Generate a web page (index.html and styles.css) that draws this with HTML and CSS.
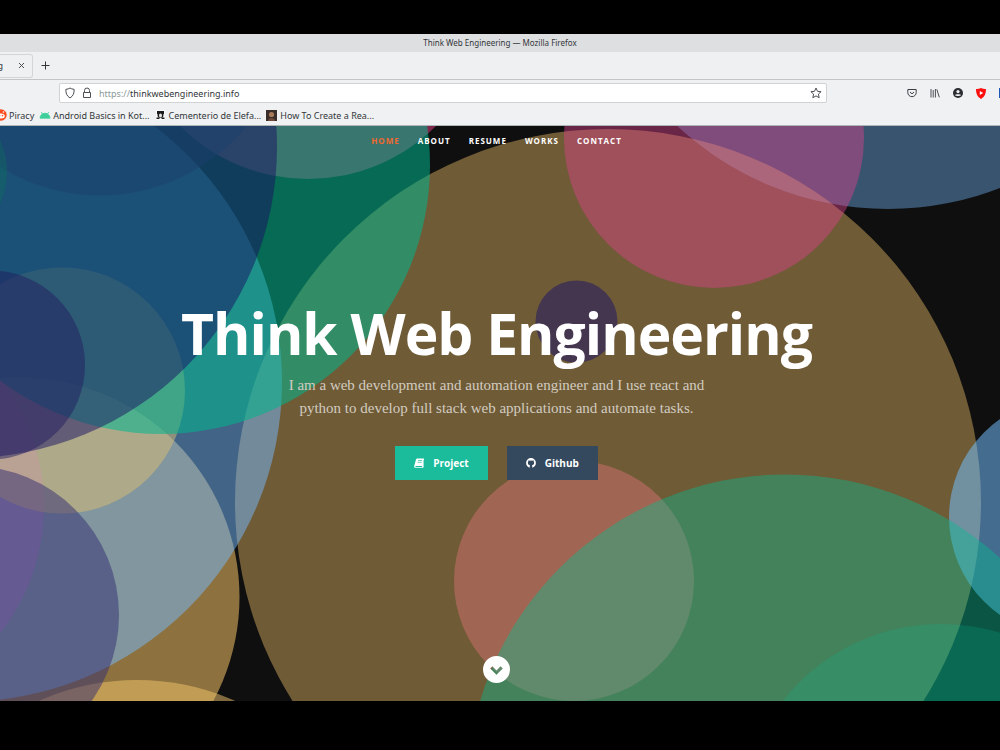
FILE: index.html
```html
<!DOCTYPE html>
<html lang="en">
<head>
    <meta charset="UTF-8">
    <meta name="viewport" content="width=device-width, initial-scale=1.0">
    <title>Think Web Engineering</title>
    <link rel="stylesheet" href="styles.css">
</head>
<body>
<div class="titlebar">Think Web Engineering — Mozilla Firefox</div>

<div class="tabs">
    <div class="tab">
        <span class="tab-title">Think Web Engineering</span>
        <button class="icon-btn" aria-label="Close tab">
            <svg width="7" height="7" viewBox="0 0 7 7"><path d="M1 1l5 5M6 1l-5 5" stroke="#4d5154" fill="none"/></svg>
        </button>
    </div>
    <button class="icon-btn new-tab" aria-label="New tab">
        <svg width="9" height="9" viewBox="0 0 9 9"><path d="M4.500 .5v8M.5 4.500h8" stroke="#33373a" fill="none"/></svg>
    </button>
</div>

<div class="toolbar">
    <div class="url-bar">
        <svg width="10" height="12" viewBox="0 0 10 12"><path d="M5 1C4 1.800 2.500 2.200.9 2.300.6 6 1.800 9 5 11c3.200-2 4.400-5 4.100-8.700C7.500 2.200 6 1.800 5 1z" fill="none" stroke="#4d5154"/></svg>
        <svg width="10" height="12" viewBox="0 0 10 12"><path d="M2.500 5.500V3.500a2.500 2.500 0 0 1 5 0v2M1.500 5.500h7v5h-7z" fill="none" stroke="#4d5154" stroke-linejoin="round"/></svg>
        <label class="url"><span class="scheme">https://</span><input type="text" value="thinkwebengineering.info" aria-label="Address"></label>
        <svg width="12" height="12" viewBox="0 0 12 12"><path d="M6 1l1.500 3.300 3.600.4-2.700 2.400.8 3.600L6 8.900l-3.200 1.800.8-3.600L.9 4.700l3.600-.4z" fill="none" stroke="#4d5154" stroke-linejoin="round"/></svg>
    </div>
    <div class="tools">
        <svg width="10" height="10" viewBox="0 0 10 10"><path d="M.8 1.500h8.400v3a4.200 4.200 0 0 1-8.400 0zM3 4l2 1.900L7 4" fill="none" stroke="#3c4043" stroke-linejoin="round"/></svg>
        <svg width="10" height="10" viewBox="0 0 10 10"><path d="M1 1v8.500M3.200 2v7.500M5.400 1v8.500M6.800 1.300l2.500 8" fill="none" stroke="#4d5154"/></svg>
        <svg width="10" height="10" viewBox="0 0 10 10"><circle cx="5" cy="5" r="5" fill="#2a2e31"/><circle cx="5" cy="3.600" r="1.600" fill="#eff0f1"/><path d="M2 7.200c0-1.300 6-1.300 6 0C7.200 8.300 2.800 8.300 2 7.200z" fill="#eff0f1"/></svg>
        <svg width="10" height="11" viewBox="0 0 10 11"><path d="M5 0c1.500.8 3.200 1.100 5 1.100C10 6 8.500 9 5 11 1.500 9 0 6 0 1.100 1.800 1.100 3.500.8 5 0z" fill="#fb0f0f"/><path d="M3.800 3l3.400 2-3.400 2z" fill="#fff"/></svg>
        <svg width="10" height="10" viewBox="0 0 10 10"><path d="M0 0h10v10H0z" fill="#1c57b5"/></svg>
    </div>
</div>

<div class="bookmarks">
    <a href="#">
        <svg width="12" height="12" viewBox="0 0 12 12"><circle cx="6" cy="6" r="5.700" fill="#fb4c1b"/><ellipse cx="6" cy="7" rx="3.800" ry="2.500" fill="#fff"/><circle cx="4.500" cy="6.600" r=".8" fill="#fb4c1b"/><circle cx="7.500" cy="6.600" r=".8" fill="#fb4c1b"/><circle cx="8.500" cy="3" r=".8" fill="#fff"/></svg>
        Piracy
    </a>
    <a href="#">
        <svg width="12" height="8" viewBox="0 0 12 8"><path d="M1 7.200a5 5 0 0 1 10 0zM2.200 1l1.600 2.500M9.800 1L8.200 3.500" fill="#3ecf9b" stroke="#3ecf9b" stroke-width=".8"/></svg>
        Android Basics in Kot...
    </a>
    <a href="#">
        <svg width="12" height="12" viewBox="0 0 12 12"><path d="M1 1h9v10H1z" fill="#fafafa"/><path d="M2 2h7v3H2z" fill="#1c1c1c"/><circle cx="5.500" cy="6" r="3" fill="#1c1c1c"/><ellipse cx="5.500" cy="6.500" rx="1.500" ry="2" fill="#e4e4e4"/><path d="M1.500 8.500h3v1.500h-3zM6.500 8.500h3v1.500h-3z" fill="#1c1c1c"/></svg>
        Cementerio de Elefa...
    </a>
    <a href="#">
        <svg width="12" height="12" viewBox="0 0 12 12"><path d="M0 1h11v11H0z" fill="#3a2e2a"/><circle cx="5.500" cy="5.500" r="2.600" fill="#a87a5c"/><path d="M2 12c0-4 7-4 7 0z" fill="#6b4a3a"/></svg>
        How To Create a Rea...
    </a>
</div>

<main class="hero">
    <svg class="circles" viewBox="0 126 1000 575" preserveAspectRatio="xMidYMid slice">
        <circle cx="888" cy="-100" r="309" fill="rgb(97,153,207)" fill-opacity=".5"/>
        <circle cx="608" cy="502" r="373" fill="rgb(255,205,112)" fill-opacity=".4"/>
        <circle cx="308" cy="-2" r="181" fill="rgb(233,65,135)" fill-opacity=".5"/>
        <circle cx="137" cy="920" r="240" fill="rgb(255,210,116)" fill-opacity=".48"/>
        <circle cx="20" cy="597" r="219.500" fill="rgb(246,197,104)" fill-opacity=".55"/>
        <circle cx="-38" cy="382" r="320" fill="rgb(117,185,253)" fill-opacity=".5"/>
        <circle cx="-163" cy="506" r="207" fill="rgb(175,122,199)" fill-opacity=".5"/>
        <circle cx="62" cy="390.500" r="123" fill="rgb(217,188,115)" fill-opacity=".5"/>
        <circle cx="100" cy="6" r="189.500" fill="rgb(66,28,86)" fill-opacity=".5"/>
        <circle cx="161" cy="165" r="269" fill="rgb(0,182,142)" fill-opacity=".55"/>
        <circle cx="-34" cy="147" r="311" fill="rgb(25,15,99)" fill-opacity=".5"/>
        <circle cx="-69" cy="172" r="76" fill="rgb(12,110,95)" fill-opacity=".4"/>
        <circle cx="-9.500" cy="365" r="94.500" fill="rgb(34,30,96)" fill-opacity=".5"/>
        <circle cx="-30" cy="615" r="149" fill="rgb(49,44,113)" fill-opacity=".5"/>
        <circle cx="714" cy="138" r="150" fill="rgb(218,66,137)" fill-opacity=".45"/>
        <circle cx="576.500" cy="321.500" r="41" fill="rgb(25,17,104)" fill-opacity=".5"/>
        <circle cx="574" cy="581" r="120" fill="rgb(209,113,112)" fill-opacity=".5"/>
        <circle cx="1068.500" cy="517" r="119.500" fill="rgb(115,190,255)" fill-opacity=".53"/>
        <circle cx="785" cy="793" r="318.500" fill="rgb(2,190,145)" fill-opacity=".4"/>
        <circle cx="941" cy="825" r="201" fill="rgb(10,185,150)" fill-opacity=".2"/>
    </svg>

    <nav class="nav">
        <a class="current" href="#home">Home</a>
        <a href="#about">About</a>
        <a href="#resume">Resume</a>
        <a href="#works">Works</a>
        <a href="#contact">Contact</a>
    </nav>

    <div class="banner" id="home">
        <h1>Think Web Engineering</h1>
        <p>I am a web development and automation engineer and I use react and<br>python to develop full stack web applications and automate tasks.</p>
        <div class="buttons">
            <a class="button project" href="#works">
                <svg width="10" height="10" viewBox="0 0 10 10"><path d="M3.200.5h6.300c.4 0 .6.300.5.700L8.300 7.500c-.1.400-.4.600-.8.600H1.800c-.6 0-.6.800 0 .8h6.100L9.600 3v5.900c-.2.600-.6.900-1.200.9H1.600C.4 9.800-.1 8.800.2 7.900L2 1.400C2.200.9 2.600.5 3.200.5z" fill="#fff"/><path d="M4.100 2.500h4M3.600 4.300h4" stroke="#1abc9c" stroke-width=".7"/></svg>
                Project
            </a>
            <a class="button github" href="#">
                <svg width="10" height="10" viewBox="0 0 10 10"><path d="M3.700 9.700C1.600 9.200.1 7.300.1 5a4.900 4.900 0 0 1 9.800 0c0 2.300-1.500 4.200-3.600 4.700V8.200c0-.5-.2-.8-.4-1C7.300 7 8.100 6.300 8.100 4.900c0-.6-.2-1-.5-1.400.1-.4.100-.9-.1-1.300-.5 0-.9.2-1.300.5a5 5 0 0 0-2.400 0c-.4-.3-.8-.5-1.300-.5-.2.400-.2.900-.1 1.300-.3.400-.5.800-.5 1.400 0 1.400.8 2.100 2.200 2.300-.2.200-.4.500-.4 1z" fill="#fff"/><path d="M2.500 3.500Q5 2.500 7.500 3.500L7.300 6 5 6.800 2.700 6z" fill="#34495e"/></svg>
                Github
            </a>
        </div>
    </div>

    <a class="scroll-down" href="#about" aria-label="Scroll down">
        <svg width="27" height="27" viewBox="0 0 27 27"><path fill-rule="evenodd" d="M13.500 0a13.500 13.500 0 1 1 0 27 13.500 13.500 0 0 1 0-27zM9.400 10.300L7.200 12.500l6.300 6.300 6.300-6.300-2.200-2.200-4.100 4.100z" fill="#fff"/></svg>
    </a>
</main>
</body>
</html>
```
FILE: styles.css
```css
* {
    box-sizing: border-box;
}
body {
    margin: 0;
    padding: 34px 0 49px;
    min-height: 100vh;
    display: flex;
    flex-direction: column;
    background: #000;
    color: #33373a;
    font-family: "Noto Sans", sans-serif;
    font-size: 9px;
    overflow-x: hidden;
}
a {
    color: inherit;
    text-decoration: none;
}
svg {
    flex: none;
    display: block;
}
.icon-btn {
    border: 0;
    padding: 0;
    background: none;
}

/* browser window */
.titlebar {
    height: 18px;
    line-height: 18px;
    font-size: 8px;
    text-align: center;
    background: #dedfe1;
}
.tabs {
    height: 28px;
    padding: 2px 0;
    display: flex;
    align-items: center;
    gap: 8px;
    background: #eff0f2;
    border-bottom: 1px solid #c3c5c7;
}
.tab {
    width: 33px;
    height: 24px;
    padding-right: 7px;
    display: flex;
    align-items: center;
    justify-content: flex-end;
    gap: 15px;
    border: 1px solid #d3d5d7;
    border-left: 0;
    border-radius: 0 3px 3px 0;
    overflow: hidden;
    white-space: nowrap;
}
.toolbar {
    height: 26px;
    padding-left: 59px;
    display: flex;
    align-items: center;
    background: #f0f1f3;
    overflow: hidden;
}
.url-bar {
    flex: 1;
    height: 20px;
    padding: 0 4px 0 5px;
    display: flex;
    align-items: center;
    gap: 7px;
    background: #fff;
    border: 1px solid #d0d2d4;
    border-radius: 2px;
}
.url {
    flex: 1;
    display: flex;
}
.scheme {
    color: #8a9a98;
}
.url input {
    flex: 1;
    border: 0;
    padding: 0;
    font: inherit;
    color: inherit;
    background: none;
}
.tools {
    margin: 0 -9px 0 80px;
    display: flex;
    align-items: center;
    gap: 13px;
}
.bookmarks {
    height: 20px;
    padding-bottom: 1px;
    display: flex;
    align-items: center;
    gap: 5px;
    background: #f0f1f3;
    border-bottom: 1px solid #aeb6b6;
}
.bookmarks a {
    display: flex;
    align-items: center;
    gap: 2px;
}
.bookmarks a:first-child {
    margin-left: -5px;
}

/* page */
.hero {
    flex: 1;
    position: relative;
    display: flex;
    flex-direction: column;
    align-items: center;
    padding-right: 7px;
    background: #0f0f0f;
    color: #fff;
    font-family: "Open Sans", sans-serif;
    overflow: hidden;
}
.circles {
    position: absolute;
    inset: 0;
    width: 100%;
    height: 100%;
}
.nav,
.banner,
.scroll-down {
    position: relative;
}
.nav {
    display: flex;
    gap: 18px;
    padding-top: 9px;
    font-size: 8px;
    line-height: 12px;
    font-weight: bold;
    letter-spacing: 1px;
    text-transform: uppercase;
}
.nav .current {
    color: #f06830;
}
.banner {
    flex: 1;
    padding-bottom: 24px;
    display: flex;
    flex-direction: column;
    justify-content: center;
    align-items: center;
    text-align: center;
}
h1 {
    margin: 0;
    font-size: 57px;
    line-height: 66px;
    letter-spacing: -1px;
}
p {
    margin: 8px 0 26px;
    font-family: "Liberation Serif", serif;
    font-size: 15px;
    line-height: 23px;
    color: #d2cbc0;
}
.buttons {
    display: flex;
    gap: 19px;
}
.button {
    height: 34px;
    padding: 0 19px;
    display: flex;
    align-items: center;
    gap: 9px;
    font-size: 10px;
    font-weight: bold;
}
.project {
    background: #1abc9c;
}
.github {
    background: #34495e;
}
.scroll-down {
    margin-bottom: 18px;
}
```
